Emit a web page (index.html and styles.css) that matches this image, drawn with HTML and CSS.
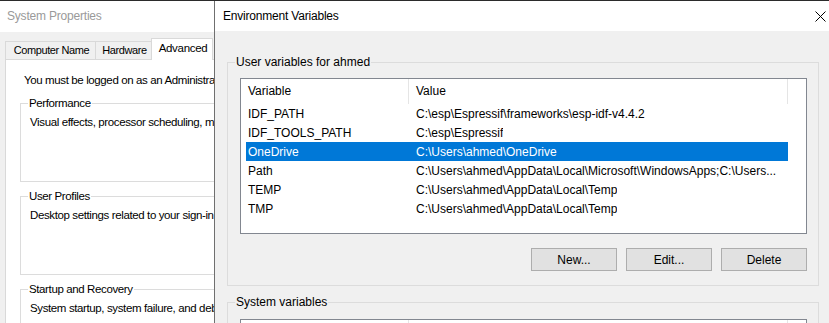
FILE: index.html
```html
<!DOCTYPE html>
<html lang="en">
<head>
    <meta charset="UTF-8">
    <title>Environment Variables</title>
    <link rel="stylesheet" href="styles.css">
</head>
<body>
    <div class="desktop">
        <!-- back window, mostly hidden behind the dialog -->
        <div class="window sysprops">
            <div class="titlebar inactive">System Properties</div>
            <div class="win-body">
                <div class="tabs">
                    <span class="tab tab-name">Computer Name</span>
                    <span class="tab tab-hw">Hardware</span>
                    <span class="tab active">Advanced</span>
                </div>
                <div class="tabpanel">
                    <p class="note">You must be logged on as an Administra</p>
                    <fieldset class="group">
                        <legend>Performance</legend>
                        <p>Visual effects, processor scheduling, m</p>
                    </fieldset>
                    <fieldset class="group">
                        <legend>User Profiles</legend>
                        <p>Desktop settings related to your sign-in</p>
                    </fieldset>
                    <fieldset class="group">
                        <legend>Startup and Recovery</legend>
                        <p>System startup, system failure, and deb</p>
                    </fieldset>
                </div>
            </div>
        </div>

        <!-- front window -->
        <div class="window envvars">
            <div class="titlebar">
                <span>Environment Variables</span>
                <svg class="close" width="11" height="11" viewBox="0 0 11 11">
                    <path d="M0.5 0.5 L10.5 10.5 M10.5 0.5 L0.5 10.5" stroke="#000" stroke-width="1" fill="none"/>
                </svg>
            </div>
            <div class="win-body env-body">
                <fieldset class="vargroup">
                    <legend>User variables for ahmed</legend>
                    <div class="listbox">
                        <div class="list-header">
                            <span class="col-name">Variable</span>
                            <span class="col-value">Value</span>
                        </div>
                        <div class="row"><span class="cell-name">IDF_PATH</span><span class="cell-value">C:\esp\Espressif\frameworks\esp-idf-v4.4.2</span></div>
                        <div class="row"><span class="cell-name">IDF_TOOLS_PATH</span><span class="cell-value">C:\esp\Espressif</span></div>
                        <div class="row selected"><span class="cell-name">OneDrive</span><span class="cell-value">C:\Users\ahmed\OneDrive</span></div>
                        <div class="row"><span class="cell-name">Path</span><span class="cell-value">C:\Users\ahmed\AppData\Local\Microsoft\WindowsApps;C:\Users...</span></div>
                        <div class="row"><span class="cell-name">TEMP</span><span class="cell-value">C:\Users\ahmed\AppData\Local\Temp</span></div>
                        <div class="row"><span class="cell-name">TMP</span><span class="cell-value">C:\Users\ahmed\AppData\Local\Temp</span></div>
                    </div>
                    <div class="buttons">
                        <button>New...</button>
                        <button>Edit...</button>
                        <button>Delete</button>
                    </div>
                </fieldset>
                <fieldset class="vargroup system">
                    <legend>System variables</legend>
                    <div class="listbox tall">
                        <div class="list-header">
                            <span class="col-name"></span>
                            <span class="col-value"></span>
                        </div>
                    </div>
                </fieldset>
            </div>
        </div>
    </div>
</body>
</html>
```

FILE: styles.css
```css
* { box-sizing: border-box; }

body {
    margin: 0;
    background: #2b2b2b;
    font-family: "Liberation Sans", Arial, sans-serif;
    font-size: 12px;
    line-height: 15px;
    color: #000;
    overflow: hidden;
}

.desktop {
    position: relative;
    width: 829px;
    height: 323px;
    overflow: hidden;
}

.window {
    position: absolute;
    top: 1px;
    background: #f0f0f0;
    white-space: nowrap;
}

.sysprops {
    left: 0;
    width: 214px;
    height: 330px;
    overflow: hidden;
}

.envvars {
    left: 214px;
    width: 620px;
    height: 330px;
    border-left: 1px solid #6f6f6f;
}

.titlebar {
    height: 30px;
    background: #fff;
    display: flex;
    align-items: center;
    justify-content: space-between;
    padding: 0 8px 0 8px;
    letter-spacing: -0.2px;
}
.sysprops .titlebar { padding-left: 7px; height: 31px; }
.titlebar.inactive { color: #9a9a9a; }

/* --- System Properties --- */
.sysprops .win-body {
    font-size: 11.5px;
    letter-spacing: -0.38px;
}
.tabs {
    display: flex;
    align-items: flex-end;
    padding: 6px 0 0 5px;
    height: 27px;
}
.tab {
    height: 18px;
    padding-left: 2px;
    text-align: center;
    border: 1px solid #d9d9d9;
    border-bottom: none;
    border-right: none;
    background: #f0f0f0;
    line-height: 17px;
    font-size: 11px;
    letter-spacing: -0.4px;
}
.tab-name { width: 90px; }
.tab-hw { width: 56px; }
.tab.active {
    width: 62px;
    height: 22px;
    background: #fff;
    border-right: 1px solid #d9d9d9;
    margin-bottom: -1px;
    position: relative;
    line-height: 19px;
    font-size: 11.5px;
    letter-spacing: -0.3px;
}
.tabpanel {
    background: #fff;
    border: 1px solid #d9d9d9;
    margin-left: 5px;
    width: 240px;
    height: 280px;
    padding: 13px 0 0 14px;
}
.note { margin: 0 0 8px 4px; }

.group {
    margin: 0 0 7px 0;
    padding: 0 7px;
    height: 86px;
    border: 1px solid #dcdcdc;
    width: 240px;
}
.group legend { padding: 0 1px; }
.group p { margin: 4px 0 0 2px; }

/* --- Environment Variables --- */
.env-body {
    padding: 24px 0 0 12px;
}
.vargroup {
    margin: 0 0 9px 0;
    padding: 0 7px 14px 7px;
    width: 592px;
    border: 1px solid #dcdcdc;
}
.vargroup legend { padding: 0 1px; }

.listbox {
    margin: 8px 0 0 5px;
    width: 567px;
    height: 156px;
    background: #fff;
    border: 1px solid #828790;
}
.system .listbox { margin-top: 9px; }
.listbox.tall { height: 200px; }

.list-header {
    display: flex;
    height: 25px;
    align-items: center;
}
.col-name {
    width: 168px;
    height: 100%;
    padding-left: 7px;
    line-height: 24px;
    border-right: 1px solid #e5e5e5;
}
.col-value {
    width: 379px;
    height: 100%;
    padding-left: 7px;
    line-height: 24px;
    border-right: 1px solid #e5e5e5;
}

.row {
    display: flex;
    height: 19px;
    line-height: 20px;
    margin-left: 5px;
    width: 542px;
}
.row.selected {
    background: #0078d7;
    color: #fff;
}
.cell-name {
    width: 170px;
    padding-left: 2px;
}
.cell-value {
    overflow: hidden;
}

.buttons {
    display: flex;
    justify-content: flex-end;
    gap: 9px;
    margin-top: 14px;
    margin-right: 4px;
}
button {
    width: 86px;
    height: 23px;
    font-family: inherit;
    font-size: 12px;
    color: #000;
    background: #e1e1e1;
    border: 1px solid #adadad;
    padding: 0;
}
```
